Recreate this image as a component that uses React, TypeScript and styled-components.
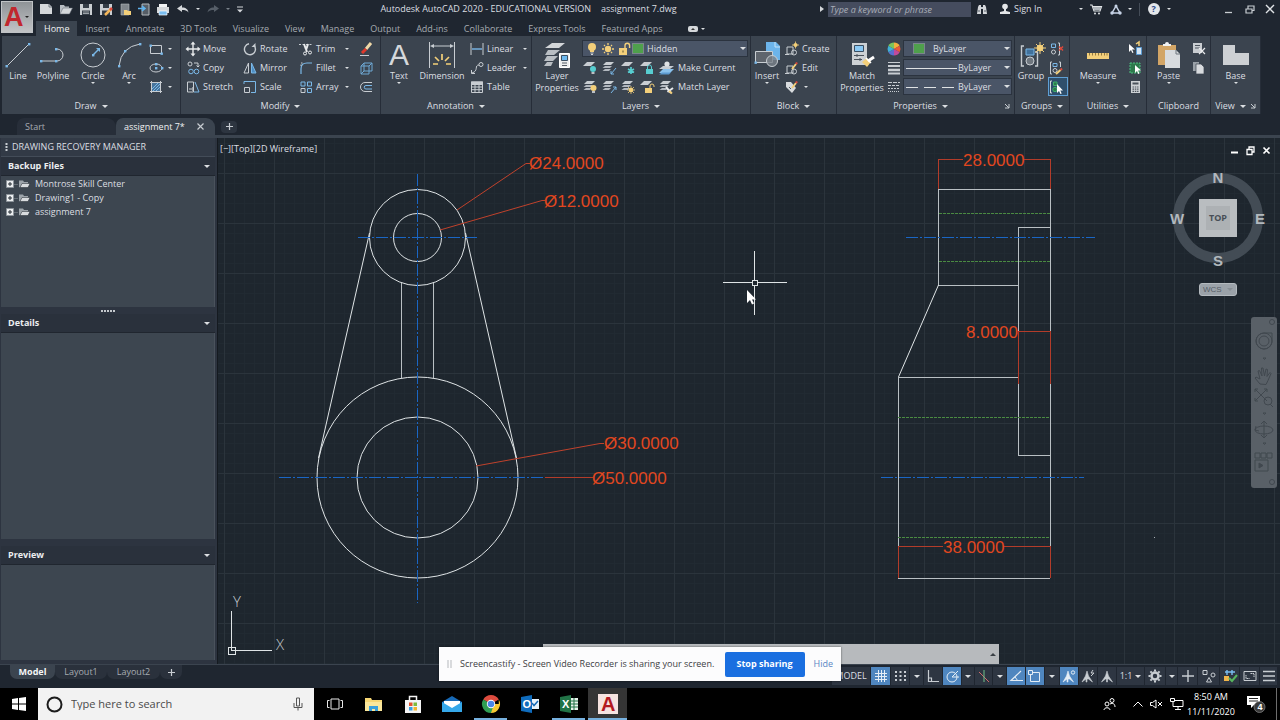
import React, { ReactNode } from 'react';
import styled, { createGlobalStyle, css } from 'styled-components';

const c = {
  frame: '#1f2630',
  panel: '#3b444f',
  line: '#262d38',
  text: '#dcdfe2',
  dim: '#a6abb1',
  icon: '#c8cdd2',
  blue: '#7ab8e8',
  yellow: '#f3cf7a',
  canvas: '#1e262e',
};

const Global = createGlobalStyle`
  * { box-sizing: border-box; }
  body { margin: 0; background: ${c.frame}; font: 9px/12px "Open Sans", "Noto Sans", sans-serif; color: ${c.text}; }
  button, input, select { font: inherit; color: inherit; margin: 0; border: 0; padding: 0; background: none; }
  ul { list-style: none; margin: 0; padding: 0; }
  svg { display: block; flex: none; overflow: visible; }
`;

const Page = styled.div`
  position: relative;
  min-height: 100vh;
  display: flex;
  flex-direction: column;
`;

/* ---------- icons ---------- */

const Icon = ({ w = 16, h = w, children }: { w?: number; h?: number; children: ReactNode }) => (
  <svg width={w} height={h} viewBox={`0 0 ${w} ${h}`} fill="none" stroke={c.icon} aria-hidden="true">
    {children}
  </svg>
);

const Caret = styled.span<{ $small?: boolean; $tone?: string; $up?: boolean }>`
  flex: none;
  width: 0;
  height: 0;
  border-left: ${(p) => (p.$small ? 2 : 3)}px solid transparent;
  border-right: ${(p) => (p.$small ? 2 : 3)}px solid transparent;
  ${(p) => (p.$up ? 'border-bottom' : 'border-top')}: ${(p) => (p.$small ? 2 : 3)}px solid ${(p) => p.$tone ?? c.text};
`;

const Dot = ({ x, y }: { x: number; y: number }) => (
  <rect x={x - 1} y={y - 1} width="2.4" height="2.4" fill={c.blue} stroke="none" />
);

const Sheets = ({ tone = c.icon }: { tone?: string }) => (
  <g fill={tone} stroke="none">
    <path d="M5 2h8l-3 3H2z" />
    <path d="M4 6h7l-2 2H1.500z" opacity=".85" />
    <path d="M4 9h6l-2 2H1.500z" opacity=".85" />
  </g>
);
const Sheet = () => <path d="M5 2h8l-4 4H1z" fill={c.icon} stroke="none" />;

const art: Record<string, ReactNode> = {
  newFile: <Icon w={14} h={12}><path d="M1 1h9l3 3v7H1z" fill="#d5d8db" stroke="none" /><path d="M10 1v3h3" stroke="#6f767e" /></Icon>,
  open: <Icon w={14} h={12}><path d="M1 11V2h4l1 1.500h4V5" fill="#b9bec4" stroke="none" /><path d="M1 11l3-6h9.500l-3 6z" fill="#d5d8db" stroke="#59616b" strokeWidth=".5" /></Icon>,
  save: <Icon w={14} h={13}><path d="M1 1h12v11H1z" fill="#c9cdd1" stroke="none" /><path d="M4 1h6v4H4zM3 7.500h8V12H3z" fill="#343c46" stroke="none" /><path d="M4 9h6M4 10.500h6" stroke="#c9cdd1" strokeWidth=".7" /></Icon>,
  saveAs: <Icon w={14} h={13}><path d="M1 1h12v11H1z" fill="#c9cdd1" stroke="none" /><path d="M4 1h6v4H4zM3 7.500h8V12H3z" fill="#343c46" stroke="none" /><path d="M6 12l6-6" stroke="#f3b65a" strokeWidth="2.500" /><path d="M11 7l2-2" stroke="#e0493b" strokeWidth="2.500" /></Icon>,
  openMobile: <Icon w={13} h={13}><path d="M2 1h8v11H2z" fill="#80868c" stroke="#b3b8bd" strokeWidth=".6" /><path d="M5 12V7h3l1 1h3v4z" fill="#f3cf7a" stroke="none" /></Icon>,
  saveMobile: <Icon w={12} h={13}><path d="M4 1h7v11H4z" fill="#565e67" stroke="#b3b8bd" /><path d="M0 5.500h6M4 3l3 2.500L4 8" stroke="#5fb4ef" strokeWidth="1.500" /></Icon>,
  print: <Icon w={14} h={13}><path d="M3 1h8v3H3z" fill="#f1f3f4" stroke="none" /><path d="M1 4h12v6H1z" fill="#d5d8db" stroke="none" /><path d="M3 8h8v4H3z" fill="#79bdf0" stroke="#fff" strokeWidth=".7" /></Icon>,
  undo: <Icon w={14} h={10}><path d="M1 4.500L6 1v2.500c4 0 6 2 6.500 5C11 6.500 9 6 6 6v2z" fill="#d5d8db" stroke="none" /></Icon>,
  redo: <Icon w={14} h={10}><path d="M13 4.500L8 1v2.500c-4 0-6 2-6.500 5C3 6.500 5 6 8 6v2z" fill="#565e68" stroke="none" /></Icon>,
  more: <Icon w={8} h={7}><path d="M1 1h6" stroke="#d5d8db" /><path d="M1 3.500h6L4 6.500z" fill="#d5d8db" stroke="none" /></Icon>,
  binoculars: <Icon w={12} h={12}><path d="M1 11l1-7 1-2h2v9zM7 11V2h2l1 2 1 7z" fill="#d5d8db" stroke="none" /><path d="M5 5h2" strokeWidth="2" /><path d="M2 8h2M8 8h2" stroke="#59616b" /></Icon>,
  user: <Icon w={12} h={12}><circle cx="6" cy="3.500" r="2.800" fill="#e4e6e8" stroke="none" /><path d="M5 5h2v3l4 1v2H1V9l4-1z" fill="#e4e6e8" stroke="none" /></Icon>,
  cart: <Icon w={12} h={11}><path d="M0 1h2l2 6h6l1.500-4.500H3" fill="none" stroke="#e0e3e6" strokeWidth="1.200" /><path d="M3 3h8l-1 3H4z" fill="#aeb4ba" stroke="none" /><circle cx="5" cy="9.500" r="1" fill="#e0e3e6" stroke="none" /><circle cx="9" cy="9.500" r="1" fill="#e0e3e6" stroke="none" /></Icon>,
  autodesk: <Icon w={12} h={11}><path d="M6 2L2 9h8z" stroke="#c7d3e6" strokeWidth="1.500" /><circle cx="6" cy="2" r="1.500" fill="#c7d3e6" stroke="none" /><circle cx="2" cy="9" r="1.700" fill="#c7d3e6" stroke="none" /><circle cx="10" cy="9" r="1.700" fill="#c7d3e6" stroke="none" /></Icon>,
  min: <Icon w={10} h={10}><path d="M1 8.500h7" strokeWidth="1.300" /></Icon>,
  restore: <Icon w={10} h={10}><path d="M1 5h6v4H1zM3 4.500V2h6v4.500H7.500" strokeWidth="1.200" /></Icon>,
  close: <Icon w={10} h={10}><path d="M1 1l8 8M9 1L1 9" stroke="#e0e3e6" strokeWidth="1.400" /></Icon>,

  line: <Icon w={28} h={28}><path d="M3 25L25 3" /><Dot x={2.500} y={25} /><Dot x={25} y={3} /></Icon>,
  polyline: <Icon w={28} h={28}><path d="M2 20h16a6 6 0 0 0 0-12" /><Dot x={2} y={20} /><Dot x={17} y={20} /><Dot x={17} y={8} /></Icon>,
  circle: <Icon w={28} h={28}><circle cx="14" cy="14" r="12" /><path d="M14 14l6-6" stroke={c.blue} strokeWidth="1.500" /><path d="M17 7h4v4z" fill={c.blue} stroke="none" /><Dot x={14} y={14} /></Icon>,
  arc: <Icon w={28} h={28}><path d="M4 25Q6 6 25 3" /><Dot x={4} y={25} /><Dot x={10} y={10} /><Dot x={25} y={3} /></Icon>,
  rect: <Icon><path d="M2.500 4.500h11v8h-11z" /><Dot x={2.500} y={4.500} /><Dot x={13.500} y={12.500} /></Icon>,
  ellipse: <Icon><ellipse cx="8" cy="8" rx="6" ry="4" /><Dot x={8} y={8} /><Dot x={8} y={4} /><Dot x={14} y={8} /></Icon>,
  hatch: <Icon><path d="M4 4h8v8H4z" fill="#47749c" stroke="none" /><path d="M4 10l6-6M5 12l7-7M8 12l4-4" stroke={c.blue} /><path d="M2 3.500h12M2 12.500h12M3.500 2v12M12.500 2v12" /></Icon>,
  move: <Icon><path d="M8 2v12M2 8h12" stroke="#e8eaec" strokeWidth="1.400" /><path d="M8 0.500l2.500 3h-5zM8 15.500l2.500-3h-5zM.5 8l3-2.500v5zM15.500 8l-3-2.500v5z" fill="#e8eaec" stroke="none" /></Icon>,
  rotate: <Icon><path d="M12 4.500A5.500 5.500 0 1 1 7 2.800" strokeWidth="1.400" /><path d="M13.500 2v4h-4z" fill={c.icon} stroke="none" /></Icon>,
  trim: <Icon><path d="M1 3.500h14" strokeDasharray="2 1.500" /><path d="M6 3l3 8M10 3L8 9" strokeWidth="2" stroke="#e8eaec" /><circle cx="7" cy="12.500" r="1.500" stroke="#e8eaec" /><circle cx="12" cy="11.500" r="1.500" stroke="#e8eaec" /></Icon>,
  erase: <Icon><path d="M8 8l5-6" stroke="#f0d9a8" strokeWidth="3" /><path d="M4 12l4-4" stroke="#e0392c" strokeWidth="3" /><path d="M2 14.500h9" stroke={c.icon} /></Icon>,
  copy: <Icon><circle cx="5" cy="4" r="2" /><path d="M9 3h4v4M11.500 5.500L13 7l1.500-1.500" /><circle cx="6" cy="11.500" r="2.300" stroke={c.blue} /><circle cx="11.500" cy="11.500" r="2.300" stroke={c.blue} /></Icon>,
  mirror: <Icon><path d="M6.500 3v10H2z" /><path d="M9.500 3v10H14z" fill="#4f8fc4" stroke={c.blue} /></Icon>,
  fillet: <Icon><path d="M3 14V9q0-6 6-6h5" stroke={c.blue} strokeWidth="1.200" /><path d="M3 6V3h3" strokeDasharray="1.500 1.500" /></Icon>,
  explode: <Icon><path d="M3 6h8v8H3zM6 3h8v8h-3M3 6l3-3v8M11 6l3-3M6 11h5M6 11l-3 3" stroke="#6fa9d6" /></Icon>,
  stretch: <Icon><path d="M2.500 3v10h6V3z" /><path d="M10 3l4 10h-5" stroke={c.blue} /><path d="M4 10h4M7 8.500l2 1.500-2 1.500" /></Icon>,
  scale: <Icon><path d="M2 5V2.500h11.500v11H9" stroke={c.blue} /><path d="M2.500 8.500h5v5h-5z" /></Icon>,
  array: <Icon><path d="M3 3h4v4H3zM9.500 3h4v4h-4zM9.500 9.500h4v4h-4z" stroke={c.blue} /><path d="M3 9.500h4v4H3z" /></Icon>,
  offset: <Icon><path d="M14 3.500H7a4.500 4.500 0 0 0 0 9h7" /><path d="M14 6.500H8a1.700 1.700 0 0 0 0 3.500h6" stroke={c.blue} /></Icon>,
  dimension: <Icon w={28} h={28}><path d="M1.500 1v26M26.500 1v26M4 5h20" /><path d="M2 5l4-2v4zM26 5l-4-2v4z" fill={c.icon} stroke="none" /><path d="M5 23h5M23 23h-5M14 13v6M7 16l4 4M21 16l-4 4" stroke={c.yellow} strokeWidth="1.700" /></Icon>,
  linear: <Icon><path d="M2 2v12M14 2v12" /><path d="M3 8h10" stroke={c.blue} strokeWidth="1.400" /></Icon>,
  leader: <Icon><circle cx="12" cy="4.500" r="2" /><path d="M10 5C5 5 10 11 3 13M2.500 10v3.500H6" /></Icon>,
  table: <Icon><path d="M2.500 3h11v10.500h-11zM2.500 8h11M2.500 10.700h11M6 5v8.500M10 5v8.500" /><path d="M2 2.500h12V6H2z" fill={c.icon} stroke="none" /></Icon>,
  layerProps: <Icon w={28} h={28}><path d="M9 2h13l-6 5H2z" fill="#d3d6d9" stroke="none" /><path d="M5 9h12l-6 5H2zM4 15h11l-5 5H1zM4 21h6l-2 4H1z" fill="#b9bec3" stroke="none" /><path d="M16.500 12.500h10v14h-10z" fill="#eceeef" stroke="#ffffff" /><path d="M18.500 14.500h6v5h-6z" fill="#6db9ef" stroke="#3a4f63" /><path d="M19 22h5M19 24.500h5" stroke="#555d66" /></Icon>,
  bulb: <Icon><circle cx="8" cy="6" r="4" fill={c.yellow} stroke="none" /><path d="M6 9h4v2H6z" fill={c.yellow} stroke="none" /><path d="M6.500 12h3M7 13.500h2" stroke="#cfd3d6" /></Icon>,
  sun: <Icon><circle cx="8" cy="8" r="3.200" fill={c.yellow} stroke="none" /><path d="M8 2v2M8 12v2M2 8h2M12 8h2M4 4l1 1M11 11l1 1M12 4l-1 1M4 12l1-1" stroke={c.yellow} strokeWidth="1.300" /></Icon>,
  unlock: <Icon><path d="M3 7h8v7H3z" fill={c.yellow} stroke="none" /><path d="M9 7V4.500a2.300 2.300 0 0 1 4.600 0V7" stroke={c.yellow} strokeWidth="1.400" /><path d="M7 9.500v2" stroke="#5b5030" /></Icon>,
  layOff: <Icon><Sheet /><circle cx="11" cy="9" r="3" fill="#57cdd0" stroke="none" /><path d="M9.500 13h3" stroke="#e8eaec" strokeWidth="1.500" /></Icon>,
  layIso: <Icon><Sheets /><path d="M15 8l-5 6M10 11v3h3" stroke={c.blue} /></Icon>,
  layFreeze: <Icon><Sheet /><path d="M11 7v7M8 9l6 3.500M14 9l-6 3.500" stroke="#57cdd0" strokeWidth="1.700" /></Icon>,
  layLock: <Icon><Sheet /><path d="M7 9h7v5H7z" fill="#57cdd0" stroke="none" /><path d="M8.500 9V7a2 2 0 0 1 4 0v2" stroke="#57cdd0" /></Icon>,
  layCurrent: <Icon w={18} h={16}><path d="M5 9h11l-4 4H1z" fill="#8ac1ec" stroke="none" /><path d="M5 6h11l-4 3H1z" fill={c.icon} stroke="none" /><path d="M4 12.500h9l-2 2H1z" fill="#5c9ad0" stroke="none" /><circle cx="9" cy="4" r="2.600" fill="#dfe2e4" stroke="none" /></Icon>,
  layOn: <Icon><Sheets /><circle cx="11.500" cy="9" r="3" fill={c.yellow} stroke="none" /><path d="M10 13h3" stroke="#e8eaec" strokeWidth="1.500" /></Icon>,
  layUniso: <Icon><Sheets /><path d="M10 14l5-6M12 8h3v3" stroke={c.blue} /></Icon>,
  layThaw: <Icon><Sheets /><circle cx="11" cy="11" r="2.200" fill={c.yellow} stroke="none" /><path d="M11 7v8M7 11h8M8 8l6 6M14 8l-6 6" stroke={c.yellow} strokeWidth=".8" /></Icon>,
  layUnlock: <Icon><Sheet /><path d="M6 9h7v5H6z" fill={c.yellow} stroke="none" /><path d="M11 9V7a2 2 0 0 1 4 0v1" stroke={c.yellow} /></Icon>,
  layMatch: <Icon w={18} h={16}><Sheets /><path d="M8 8l5 6M9.500 13L15 9" stroke="#e8eaec" strokeWidth="2" /><path d="M11 12l3 2.500" stroke={c.yellow} strokeWidth="2" /></Icon>,
  insert: <Icon w={28} h={28}><path d="M13 1h10l4 4v14H13z" fill="#6cb4ea" stroke="none" /><path d="M22 1v5h5" stroke="#c5e2f7" /><path d="M2.500 10.500h17v11h-17z" fill="#5f656d" /><circle cx="19" cy="20" r="5.500" fill="#7a828a" fillOpacity=".8" /><Dot x={2.500} y={21.500} /></Icon>,
  blkCreate: <Icon><path d="M3 6h6v7H3zM1 13.500h4" /><circle cx="10" cy="11.500" r="2.500" /><circle cx="11.500" cy="4" r="2" fill={c.yellow} stroke="none" /><path d="M11.500 .5v7M8 4h7" stroke={c.yellow} strokeWidth=".8" /></Icon>,
  blkEdit: <Icon><path d="M3 6h6v7H3zM1 13.500h4" /><circle cx="10" cy="11.500" r="2.500" /><path d="M8 9l4-5" stroke={c.yellow} strokeWidth="2" /><path d="M12 4l1-1.500" stroke="#e0493b" strokeWidth="2.200" /></Icon>,
  blkAttr: <Icon><path d="M2 3h5l5 6-4 5-6-6z" fill="#d8dbde" stroke="none" /><path d="M5 8l2 2" stroke="#505861" /><path d="M8 9l4-5" stroke={c.yellow} strokeWidth="2" /><path d="M12 4l1-1.500" stroke="#e0493b" strokeWidth="2.200" /></Icon>,
  matchProps: <Icon w={28} h={28}><path d="M4 2h15v22H4z" fill="#cdd1d4" stroke="none" /><path d="M6.500 4.500h9v6h-9z" fill="#8ac9f4" stroke="#3a4f63" /><path d="M6 14.500h10M6 18.500h8" stroke="#4b535c" /><path d="M9 13v3M12 17v3" stroke="#4b535c" /><path d="M14 21l5 5 4-5-4-4z" fill={c.yellow} stroke="none" /><path d="M20 20l6-4" stroke="#fff" strokeWidth="3" /><path d="M18 17l5 5" stroke="#fff" strokeWidth="1.500" /></Icon>,
  wheel: <Icon w={14}><g stroke="none"><path d="M7 7V0.500A6.500 6.500 0 0 1 12.600 3.800z" fill="#f2b13c" /><path d="M7 7l5.600-3.200a6.500 6.500 0 0 1 0 6.400z" fill="#e85a3a" /><path d="M7 7l5.600 3.200A6.500 6.500 0 0 1 7 13.500z" fill="#c24a9a" /><path d="M7 7v6.500a6.500 6.500 0 0 1-5.600-3.300z" fill="#5a6fd0" /><path d="M7 7l-5.600 3.200a6.500 6.500 0 0 1 0-6.400z" fill="#3fb0d8" /><path d="M7 7L1.400 3.800A6.500 6.500 0 0 1 7 .5z" fill="#7cc45a" /></g></Icon>,
  weights: <Icon w={14}><path d="M1 1.500h12" /><path d="M1 5h12" strokeWidth="2" /><path d="M1 9h12" strokeWidth="2.500" /><path d="M1 12.500h12" strokeWidth="2" /></Icon>,
  dashes: <Icon w={14}><path d="M1 2.500h12" strokeDasharray="4 1" /><path d="M1 5.500h12" strokeDasharray="3 1" /><path d="M1 8.500h12" strokeDasharray="2 1" /><path d="M1 11.500h12" strokeDasharray="1 1" /></Icon>,
  group: <Icon w={28} h={28}><path d="M7 5H4.500v20H7M18 11h2.500v14H18" strokeWidth="1.400" /><path d="M9 8h8v6H9z" fill="#41719b" stroke={c.blue} /><circle cx="13" cy="20" r="4" fill="#6f777f" /><circle cx="23" cy="7" r="3.300" fill={c.yellow} stroke="none" /><path d="M23 1v12M17 7h12M19 3l8 8M27 3l-8 8" stroke={c.yellow} /></Icon>,
  ungroup: <Icon><path d="M3.500 3h4v3.500h-4z" stroke={c.blue} /><circle cx="5.500" cy="11" r="2" /><path d="M10 2h1.500v12H10" /><path d="M11 5.500l4 4M15 5.500l-4 4" stroke="#e0493b" strokeWidth="1.400" /></Icon>,
  groupEdit: <Icon><path d="M4 2H2.500v12H4M11 2h1.500v5" /><path d="M5 3.500h4v3H5z" stroke={c.blue} /><circle cx="7" cy="10.500" r="2" /><path d="M8 14l4.500-4" stroke={c.yellow} strokeWidth="2" /><path d="M12.500 10L14 8.500" stroke="#e0493b" strokeWidth="2" /></Icon>,
  groupSel: <Icon><path d="M4 2H2.500v12H4" stroke="#d8dbde" /><path d="M5.500 3h3.500v3.500H5.500z" stroke="#3fae6c" fill="#2d7a4c" /><circle cx="7" cy="10.500" r="2.200" stroke="#3fae6c" fill="#2d7a4c" /><path d="M9 5v9l2-2 1.500 3 1.200-.6-1.400-2.900H15z" fill="#fff" stroke="none" /></Icon>,
  measure: <Icon w={28} h={28}><path d="M3 12h22v6H3z" fill={c.yellow} stroke="none" /><path d="M5.500 12v2.500M8.500 12v2.500M11.500 12v2.500M14.500 12v2.500M17.500 12v2.500M20.500 12v2.500M23 12v2.500" stroke="#7b6432" strokeWidth=".8" /></Icon>,
  quickSel: <Icon><path d="M9.500 6.500h5v7h-5z" fill="#d5e6f5" stroke="#5c9ad0" /><path d="M9 3l3-2v4" stroke={c.yellow} strokeWidth="1.500" /><path d="M2 3v8l2-2 1.300 3 1.200-.6-1.400-2.800H8z" fill="#fff" stroke="none" /></Icon>,
  selectAll: <Icon><path d="M3 3h10v10H3z" fill="#2d7a4c" stroke="#4fc080" strokeDasharray="2 1" /><path d="M8 5v8l2-2 1.300 3 1.200-.6-1.400-2.800H14z" fill="#fff" stroke="none" /></Icon>,
  calc: <Icon><path d="M4 2h9v12H4z" fill="#cdd1d4" stroke="none" /><path d="M5.500 3.500h6v2h-6z" fill="#4b535c" stroke="none" /><path d="M5.500 8h6M5.500 10.200h6M5.500 12.400h6" stroke="#4b535c" strokeWidth="1.200" strokeDasharray="1.500 .8" /></Icon>,
  paste: <Icon w={28} h={28}><path d="M3 4h18v20H3z" fill="#d2a566" stroke="none" /><path d="M8 5V3h2a2 2 0 0 1 4 0h2v2z" fill="#f0f1f2" stroke="none" /><path d="M10 9h11l4 4v14H10z" fill="#d8dbde" stroke="none" /><path d="M21 9v4h4" stroke="#6f767e" /></Icon>,
  cut: <Icon><path d="M2 2h9v10H2z" fill="#c9cdd1" stroke="none" /><path d="M4 4.500h5M4 7h5" stroke="#4b535c" /><path d="M8 7l6 6M14 7l-6 6" stroke="#e8eaec" strokeWidth="1.200" /></Icon>,
  copyClip: <Icon><path d="M2 2h6v9H2z" fill="#9aa1a8" stroke="none" /><path d="M5 4h5l3 3v7H5z" fill="#d8dbde" stroke="#3b444f" strokeWidth=".7" /></Icon>,
  base: <Icon w={28} h={28}><path d="M1 4h12v8h14v12H1z" fill="#cdd0d3" stroke="none" /></Icon>,
  launcher: <Icon w={6} h={6}><path d="M1 1l4 4M5 1v4H1" /></Icon>,
};

/* ---------- title bar ---------- */

const Header = styled.header`
  display: grid;
  grid-template-columns: 36px 1fr;
  grid-template-rows: 18px 18px;
`;
const AppButton = styled.button`
  grid-row: 1 / 3;
  align-self: start;
  width: 32px;
  height: 32px;
  margin: 1px 0 0 1px;
  display: flex;
  align-items: center;
  gap: 1px;
  background: linear-gradient(#8f9397, #c2c4c6);
  color: #c1272d;
  font: bold 27px/30px "Liberation Sans", sans-serif;
  padding-left: 2px;
  border: 1px solid #c0c3c6;
`;
const TitleBar = styled.div`
  display: flex;
  align-items: center;
`;
const QuickBar = styled.div`
  display: flex;
  align-items: center;
  gap: 6px;
  width: 207px;
  padding-left: 3px;
`;
const PlainButton = styled.button`
  display: flex;
  align-items: center;
  gap: 3px;
  white-space: nowrap;
`;
const Title = styled.h1`
  flex: 1;
  display: flex;
  justify-content: center;
  gap: 10px;
  margin: 0;
  padding-right: 6px;
  font: inherit;
  white-space: nowrap;
`;
const Search = styled.input`
  width: 143px;
  height: 15px;
  margin: 0 5px 0 4px;
  padding: 0 2px;
  background: #454c5e;
  font-style: italic;
  &::placeholder { color: #a9aeb8; opacity: 1; }
`;
const TitleTools = styled.div<{ $gap: number; $w: number }>`
  display: flex;
  align-items: center;
  justify-content: space-between;
  gap: ${(p) => p.$gap}px;
  width: ${(p) => p.$w}px;
`;
const Spacer = styled.span<{ $w: number }>`
  flex: 0 0 ${(p) => p.$w}px;
`;
const Help = styled.button`
  width: 12px;
  height: 12px;
  border-radius: 50%;
  background: #e4e7ea;
  color: #2b4a8c;
  font-weight: bold;
`;
const Divider = styled.span`
  width: 1px;
  height: 13px;
  background: #454d58;
`;

const Tabs = styled.nav`
  display: flex;
  align-items: flex-end;
`;
const Tab = styled.button<{ $on?: boolean }>`
  height: 15px;
  padding: 0 8px;
  color: ${(p) => (p.$on ? '#f0f1f2' : c.dim)};
  background: ${(p) => (p.$on ? c.panel : 'transparent')};
  white-space: nowrap;
`;
const Pill = styled.span`
  width: 10px;
  height: 6px;
  border-radius: 2px;
  background: #d5d8db;
  display: flex;
  align-items: center;
  justify-content: center;
`;

/* ---------- ribbon ---------- */

const Ribbon = styled.div`
  display: flex;
  padding-left: 2px;
`;
const PanelBox = styled.section<{ $w: number }>`
  flex: 0 0 ${(p) => p.$w}px;
  display: flex;
  flex-direction: column;
  background: ${c.panel};
  border-right: 1px solid ${c.line};
`;
const PanelBody = styled.div`
  display: flex;
  height: 62px;
  padding-top: 3px;
`;
const PanelFoot = styled.div`
  display: flex;
  align-items: center;
  height: 16px;
`;
const PanelName = styled.button`
  flex: 1;
  display: flex;
  align-items: center;
  justify-content: center;
  gap: 5px;
`;
const Launcher = styled.button`
  width: 10px;
`;
const Panel = ({ name, w, caret = true, launcher, children }: { name: string; w: number; caret?: boolean; launcher?: boolean; children: ReactNode }) => (
  <PanelBox $w={w}>
    <PanelBody>{children}</PanelBody>
    <PanelFoot>
      <PanelName>{name}{caret && <Caret />}</PanelName>
      {launcher && <Launcher aria-label={`${name} settings`}>{art.launcher}</Launcher>}
    </PanelFoot>
  </PanelBox>
);

const BigBtn = styled.button<{ $w: number }>`
  flex: 0 0 ${(p) => p.$w}px;
  display: flex;
  flex-direction: column;
  align-items: center;
  white-space: nowrap;
`;
const BigIcon = styled.span`
  height: 31px;
  display: flex;
  align-items: center;
`;
const BigLetter = styled.span`
  font: 30px/30px "Liberation Sans", sans-serif;
  color: #d5d8db;
`;
const Big = ({ icon, label, w, caret }: { icon: ReactNode; label: string; w: number; caret?: boolean }) => (
  <BigBtn $w={w}>
    <BigIcon>{icon}</BigIcon>
    {label.split('\n').map((t) => <span key={t}>{t}</span>)}
    {caret && <Caret $small />}
  </BigBtn>
);

const Col = styled.div<{ $w?: number; $ml?: number }>`
  display: grid;
  grid-template-rows: repeat(3, 19px);
  width: ${(p) => (p.$w ? p.$w + 'px' : 'auto')};
  margin-left: ${(p) => p.$ml ?? 0}px;
`;
const SmallBtn = styled.button<{ $on?: boolean }>`
  display: flex;
  align-items: center;
  gap: 2px;
  white-space: nowrap;
  ${(p) => p.$on && css`background: #2f4f6c; outline: 1px solid #5f9fd4; outline-offset: -1px;`}
`;
const SmallLabel = styled.span<{ $grow?: boolean }>`
  flex: ${(p) => (p.$grow ? 1 : 'none')};
  text-align: left;
`;
const Cmd = ({ icon, label, caret, on, tip }: { icon: string; label?: string; caret?: boolean; on?: boolean; tip?: string }) => (
  <SmallBtn $on={on} aria-label={label ? undefined : tip ?? icon}>
    {art[icon]}
    {label && <SmallLabel $grow={caret}>{label}</SmallLabel>}
    {caret && <><span /><Caret $small /></>}
  </SmallBtn>
);
const Row = styled.div`
  display: flex;
  align-items: center;
  gap: 3px;
`;

const Combo = styled.label<{ $w: number }>`
  position: relative;
  display: flex;
  align-items: center;
  align-self: center;
  width: ${(p) => p.$w}px;
  height: 17px;
  background: #4a5567;
  border: 1px solid #2b333f;
`;
const ComboSelect = styled.select<{ $pad: number }>`
  appearance: none;
  width: 100%;
  height: 15px;
  padding-left: ${(p) => p.$pad}px;
`;
const ComboArt = styled.span`
  position: absolute;
  left: 1px;
  display: flex;
  align-items: center;
  pointer-events: none;
`;
const ComboCaret = styled.span`
  position: absolute;
  right: 1px;
  display: flex;
  pointer-events: none;
`;
const Swatch = styled.span<{ $ml: number }>`
  width: 12px;
  height: 11px;
  margin-left: ${(p) => p.$ml}px;
  background: #4fa04c;
  border: 1px solid #7b868c;
`;
const Picker = ({ w, pad, value, name, children }: { w: number; pad: number; value: string; name: string; children: ReactNode }) => (
  <Combo $w={w}>
    <ComboSelect $pad={pad} aria-label={name}><option>{value}</option></ComboSelect>
    <ComboArt>{children}</ComboArt>
    <ComboCaret><Caret /></ComboCaret>
  </Combo>
);

/* ---------- file tabs ---------- */

const FileTabs = styled.div`
  display: flex;
  align-items: flex-end;
  height: 24px;
  padding: 4px 0 0 17px;
  border-bottom: 3px solid ${c.panel};
`;
const FileTab = styled.div<{ $on?: boolean }>`
  display: flex;
  align-items: center;
  justify-content: space-between;
  width: 99px;
  height: 17px;
  padding: 0 11px 0 8px;
  border-radius: 7px 9px 0 0;
  background: ${(p) => (p.$on ? c.panel : '#272e39')};
  color: ${(p) => (p.$on ? '#f0f1f2' : c.dim)};
`;
const AddTab = styled.button`
  align-self: center;
  width: 16px;
  height: 12px;
  margin-left: 6px;
  border-radius: 4px;
  background: #2d3540;
  display: flex;
  align-items: center;
  justify-content: center;
`;
const Cross = () => <Icon w={7}><path d="M.5 .5l6 6M6.500 .5l-6 6" strokeWidth="1.200" /></Icon>;
const Plus = () => <Icon w={7}><path d="M3.500 0v7M0 3.500h7" strokeWidth="1.200" /></Icon>;

/* ---------- recovery manager ---------- */

const Main = styled.main`
  flex: 1;
  display: flex;
  border-bottom: 1px solid ${c.panel};
`;
const Side = styled.aside`
  flex: 0 0 218px;
  display: flex;
  flex-direction: column;
  padding: 0 2px 4px 1px;
  background: #2d3440;
  border-right: 1px solid #151a20;
`;
const SideTitle = styled.h2`
  display: flex;
  align-items: center;
  gap: 4px;
  height: 19px;
  margin: 0;
  padding-left: 4px;
  font: inherit;
  background: #323a46;
  border-bottom: 1px solid #434c58;
`;
const SectionHead = styled.button`
  display: flex;
  align-items: center;
  justify-content: space-between;
  height: 19px;
  padding: 0 5px 0 7px;
  background: #2a313c;
  border-bottom: 1px solid #20262f;
  font-weight: bold;
  color: #eceef0;
`;
const SectionBody = styled.div<{ $grow: number }>`
  flex: ${(p) => p.$grow} 0 0;
  background: #3d4650;
  border-right: 1px solid #4a525c;
`;
const Splitter = styled.div`
  display: flex;
  align-items: center;
  justify-content: center;
  height: 7px;
  gap: 1px;
`;
const SplitDot = styled.i`
  width: 2px;
  height: 2px;
  background: #c4c8cc;
`;
const Tree = styled.ul`
  padding-top: 1px;
`;
const TreeRow = styled.li`
  display: flex;
  align-items: center;
  height: 14px;
  gap: 5px;
  padding-left: 5px;
`;

/* ---------- drawing canvas ---------- */

const Canvas = styled.section`
  position: relative;
  flex: 1;
  min-height: 526px;
  background-color: ${c.canvas};
  background-image:
    linear-gradient(#2b343c 1px, transparent 1px),
    linear-gradient(90deg, #2b343c 1px, transparent 1px),
    linear-gradient(#212a32 1px, transparent 1px),
    linear-gradient(90deg, #212a32 1px, transparent 1px);
  background-size: 50px 50px, 50px 50px, 10px 10px, 10px 10px;
  background-position: 0 35px, 6px 0, 0 5px, 6px 0;
`;
const Drawing = styled.svg`
  position: absolute;
  inset: 0;
  width: 100%;
  height: 100%;
`;
const ViewLabel = styled.div`
  position: absolute;
  top: 5px;
  left: 2px;
`;
const WindowTools = styled.div`
  position: absolute;
  top: 8px;
  right: 9px;
  display: flex;
  gap: 7px;
`;
const CubeBox = styled.div`
  position: absolute;
  top: 30px;
  right: 12px;
  width: 100px;
  display: flex;
  flex-direction: column;
  align-items: center;
  gap: 15px;
`;
const Wcs = styled.button`
  display: flex;
  align-items: center;
  justify-content: space-between;
  width: 38px;
  height: 13px;
  padding: 0 3px;
  border-radius: 3px;
  background: #9ba2a9;
  border: 1px solid #b4babf;
  color: #555d66;
  font: 8px/10px "Liberation Sans", sans-serif;
`;
const NavBar = styled.div`
  position: absolute;
  top: 179px;
  right: 3px;
  width: 26px;
  height: 171px;
  border-radius: 3px;
  background: #596067;
`;
const CommandLine = styled.div`
  position: absolute;
  left: 325px;
  right: 281px;
  bottom: 0;
  height: 20px;
  display: flex;
  align-items: center;
  background: #b7babd;
  padding-right: 3px;
`;
const CommandInput = styled.input`
  flex: 1;
  height: 20px;
  color: #222;
`;

const Centre = ({ d }: { d: string }) => <path d={d} stroke="#1a66c4" strokeDasharray="12 2 2 2" />;

const Part = () => (
  <Drawing viewBox="218 138 1062 526" preserveAspectRatio="xMinYMin meet" fill="none" role="img" aria-label="Link arm, front and side views">
    <g stroke="#dfe4e6">
      <circle cx="417.500" cy="237.500" r="48" />
      <circle cx="417.500" cy="237.500" r="24" />
      <circle cx="417.500" cy="477.500" r="100.500" />
      <circle cx="417.500" cy="477.500" r="60.500" />
      <path d="M369.500 233L318.500 458M465.500 233L516.500 458" />
    </g>
    <g stroke="#b9c0c4" shapeRendering="crispEdges">
      <path d="M401.500 283V378M433.500 283V378" />
      <path d="M938.500 189V285.500H1018M938 189.500H1050.500V546" />
      <path d="M1018.500 332V227.500H1050M1018.500 384V455.500H1050" />
      <path d="M898.500 546V377.500H1018M898 578H1050" />
    </g>
    <path d="M938.500 285L898.500 377" stroke="#dfe4e6" />
    <Centre d="M417.500 174V603" />
    <Centre d="M358 237.500H477" />
    <Centre d="M279 477.500H545" />
    <Centre d="M906 237.500H1095" />
    <Centre d="M881 477.500H1084" />
    <path d="M939 213.500H1050M939 261.500H1050M898 417.500H1050M898 537.500H1050" stroke="#4a8a42" strokeDasharray="3 1" />
    <path d="M457 210L526 163.500H530M440 230L542 200.500H545M476 466L600 443.500H604" stroke="#c0422c" />
    <path d="M545 477.500H593M938.500 189V159.500H963M1024 159.500H1050.500V189M1018.500 384V331.500H1050.500V384M898.500 578V546.500H943M1004 546.500H1050.500V578" stroke="#b33c2a" shapeRendering="crispEdges" />
    <g fill="#e2471f" fontFamily="Liberation Sans, Arial, sans-serif" fontSize="17">
      <text x="529" y="169">Ø24.0000</text>
      <text x="544" y="207">Ø12.0000</text>
      <text x="604" y="449">Ø30.0000</text>
      <text x="592" y="484">Ø50.0000</text>
      <text x="963" y="166">28.0000</text>
      <text x="966" y="338">8.0000</text>
      <text x="943" y="553">38.0000</text>
    </g>
    <g stroke="#dfe4e6" shapeRendering="crispEdges">
      <path d="M754.500 251V280M754.500 286V315M723 282.500H752M758 282.500H787M752.500 280.500h5v5h-5z" />
      <path d="M231.500 611V650.500H272M228.500 647.500h7v7h-7z" />
    </g>
    <path d="M747 290v13l3-3 2 4.500 2-1-2-4h4z" fill="#fff" />
    <rect x="1154" y="537" width="1" height="1" fill="#a9b0b5" />
    <g fill="#c3c9cd" fontFamily="Open Sans, sans-serif" fontWeight="300" fontSize="15">
      <text x="233" y="607">Y</text>
      <text x="276" y="650">X</text>
    </g>
  </Drawing>
);

const Cube = () => (
  <svg width="100" height="100" viewBox="0 0 100 100">
    <circle cx="50" cy="50" r="40" fill="none" stroke="#434c55" strokeWidth="10" />
    <rect x="31" y="31" width="38" height="38" fill="#b9bdc0" />
    <rect x="38" y="38" width="24" height="24" fill="#adb1b4" />
    <g fill="#b2b8bd" fontFamily="Liberation Sans, sans-serif" fontWeight="bold" fontSize="15" textAnchor="middle">
      <text x="50" y="15">N</text>
      <text x="50" y="98">S</text>
      <text x="9" y="56">W</text>
      <text x="92" y="56">E</text>
    </g>
    <text x="50" y="53" fill="#474e56" fontFamily="Open Sans, sans-serif" fontWeight="bold" fontSize="9" textAnchor="middle">TOP</text>
  </svg>
);

const NavArt = () => (
  <svg width="26" height="171" viewBox="0 0 26 171" fill="none" stroke="#41484f">
    <circle cx="21" cy="5" r="2.500" />
    <path d="M13 16h8v9a8 8 0 1 1-8-9z" />
    <circle cx="13" cy="24" r="5" /><circle cx="13" cy="24" r="8" />
    <path d="M12 41h3l-1.500 1.500zM12 96h3l-1.500 1.500zM12 126h3l-1.500 1.500z" />
    <path d="M9 67l-5-6 1-1 4 2-2-8 1.500-.5L11 59l-.5-8h1.500l1.500 8 1.500-7 1.500.5-.5 7 3-4 1 1-3 7-2 4z" />
    <path d="M4 72l12 12M16 72L4 84M4 75v-3h3M13 72h3v3M4 81v3h3" /><circle cx="17" cy="84" r="4" /><path d="M19 87l3 3" />
    <ellipse cx="13" cy="113" rx="9" ry="4" /><path d="M13 104v17M10 107l3-3 3 3M10 118l3 3 3-3M5 109l-1 4 4 1" />
    <path d="M4 136h5v5H4zM10 136h5v5h-5zM16 136h5v5h-5zM4 143h13v11H4z" /><path d="M8 146v5l4-2.500z" fill="#41484f" />
    <circle cx="21" cy="165" r="2.500" />
  </svg>
);

/* ---------- status bar ---------- */

const StatusBar = styled.footer`
  display: flex;
  align-items: flex-start;
  justify-content: space-between;
  height: 23px;
`;
const LayoutTabs = styled.div`
  display: flex;
  padding-left: 10px;
`;
const LayoutTab = styled.button<{ $w: number; $on?: boolean }>`
  display: flex;
  align-items: center;
  justify-content: center;
  width: ${(p) => p.$w}px;
  height: 14px;
  border-radius: 0 0 7px 7px;
  background: ${(p) => (p.$on ? c.panel : '#2a313c')};
  color: ${(p) => (p.$on ? '#f4f5f6' : c.dim)};
  font-weight: ${(p) => (p.$on ? 'bold' : 'normal')};
`;
const StatusTools = styled.div`
  display: flex;
  gap: 1px;
  padding: 2px 3px 0 0;
`;
const StatusBtn = styled.button<{ $w: number; $on?: boolean }>`
  display: flex;
  align-items: center;
  justify-content: center;
  gap: 3px;
  width: ${(p) => p.$w}px;
  height: 18px;
  background: ${(p) => (p.$on ? '#4f86bf' : '#2e3642')};
`;

const st = {
  grid: <Icon w={14}><path d="M4.500 1v12M7.500 1v12M10.500 1v12M1 4.500h12M1 7.500h12M1 10.500h12" stroke="#e4edf5" /></Icon>,
  snap: <Icon w={14}><path d="M2 3h11M2 7h11M2 11h11" strokeWidth="2" strokeDasharray="2 2.500" /></Icon>,
  ortho: <Icon w={14}><path d="M2.500 1v11.500H13M2.500 9h3v3.500" strokeWidth="1.200" /></Icon>,
  polar: <Icon w={14}><circle cx="7" cy="8" r="5" stroke="#e4edf5" /><path d="M7 8l6-6M7 8h7" stroke="#e4edf5" /></Icon>,
  iso: <Icon w={14}><path d="M2 3l10 10" stroke="#cf6a6a" /><path d="M7 1v12" stroke="#6fbf8a" /></Icon>,
  track: <Icon w={14}><path d="M12 2L2 11.500h12" stroke="#e4edf5" strokeWidth="1.200" /><path d="M6 8l3 4" stroke="#e4edf5" /></Icon>,
  osnap: <Icon w={14}><path d="M2.500 3.500h9v9h-9z" stroke="#e4edf5" /><path d="M.5 1.500h4v4h-4z" fill="#4f86bf" stroke="#e4edf5" /></Icon>,
  annoA: <Icon w={14}><path d="M6 2l1.500 5 4 6-4-3H6v3H5v-3l-4 3 3.500-6z" fill="#e4edf5" stroke="#e4edf5" strokeWidth=".6" /><circle cx="11" cy="3.500" r="1.700" stroke="#e4edf5" /></Icon>,
  annoB: <Icon w={14}><path d="M6 2l1.500 5 4 6-4-3H6v3H5v-3l-4 3 3.500-6z" fill={c.icon} strokeWidth=".6" /><path d="M12 1l-2 3h3l-3 3" /></Icon>,
  annoC: <Icon w={14}><path d="M7 2l1.500 5 4 6-4-3H7.500v3h-1v-3H5.500l-4 3 4-6z" fill={c.icon} strokeWidth=".6" /></Icon>,
  gear: <Icon w={14}><circle cx="7" cy="7" r="3.500" strokeWidth="2.500" /><path d="M7 .5v2M7 11.500v2M.5 7h2M11.500 7h2M2.400 2.400l1.400 1.400M10.200 10.200l1.400 1.400M11.600 2.400l-1.400 1.400M2.400 11.600l1.400-1.400" strokeWidth="2" /></Icon>,
  plus: <Icon w={14}><path d="M7 1v12M1 7h12" strokeWidth="1.400" /></Icon>,
  shapes: <Icon w={14}><path d="M1 1.500h4v4H1zM4.500 13l2.500-4.500L9.500 13z" /><circle cx="11" cy="6" r="2" /></Icon>,
  perf: <Icon w={14}><path d="M1 7h5v5H1z" fill="#f0b54a" stroke="none" /><path d="M2 3h10M4 1v5M9 1v5" stroke="#79bdf0" strokeWidth="1.400" /><path d="M6 9l3 3 5-6" stroke="#57b55e" strokeWidth="2" /></Icon>,
  full: <Icon w={14}><path d="M1 2.500h12v9H1z" /><path d="M7.500 4.500H11V8M3 6v3.500h3.500" strokeDasharray="1.500 .5" /></Icon>,
  menu: <Icon w={14}><path d="M1 2.500h12M1 7h12M1 11.500h12" strokeWidth="1.600" /></Icon>,
};

/* ---------- share notice ---------- */

const Notice = styled.div`
  position: absolute;
  bottom: 39px;
  left: 50%;
  width: 402px;
  height: 34px;
  margin-left: -201px;
  display: flex;
  align-items: center;
  padding: 0 8px;
  background: #fcfcfd;
  color: #3c4043;
  box-shadow: 0 0 2px #0008;
  white-space: nowrap;
`;
const NoticeText = styled.span`
  margin-left: 8px;
  flex: 1;
`;
const StopButton = styled.button`
  width: 80px;
  height: 25px;
  border-radius: 2px;
  background: #1a6fe0;
  color: #fff;
  font-weight: bold;
`;
const HideLink = styled.a`
  margin-left: 9px;
  color: #5a86c4;
  text-decoration: none;
`;

/* ---------- taskbar ---------- */

const Taskbar = styled.nav`
  display: flex;
  height: 32px;
  background: #000;
`;
const Start = styled.button`
  width: 38px;
  display: flex;
  align-items: center;
  justify-content: center;
`;
const TaskSearch = styled.label`
  display: flex;
  align-items: center;
  width: 276px;
  padding: 0 11px 0 8px;
  gap: 8px;
  background: #f2f2f2;
`;
const TaskInput = styled.input`
  flex: 1;
  min-width: 0;
  font-size: 11px;
  color: #333;
  &::placeholder { color: #4a4a4a; opacity: 1; }
`;
const Apps = styled.div`
  display: flex;
  margin-left: 1px;
`;
const AppBtn = styled.button<{ $run?: boolean; $active?: boolean }>`
  position: relative;
  width: 39px;
  display: flex;
  align-items: center;
  justify-content: center;
  background: ${(p) => (p.$active ? '#353535' : 'none')};
  ${(p) => (p.$run || p.$active) && css`
    &::after { content: ''; position: absolute; bottom: 0; left: ${p.$active ? 0 : 3}px; right: ${p.$active ? 0 : 3}px; height: 2px; background: #76b0de; }
  `}
`;
const Tray = styled.div`
  display: flex;
  align-items: center;
  gap: 7px;
  margin-left: auto;
  padding-right: 3px;
`;
const Clock = styled.time`
  width: 48px;
  margin: 0 4px 0 -4px;
  text-align: center;
  line-height: 15px;
  color: #fff;
`;
const DesktopEdge = styled.span`
  width: 1px;
  height: 32px;
  margin-left: 3px;
  background: #6d6d6d;
`;
const glyph = { fontFamily: 'Liberation Sans, sans-serif', fontWeight: 'bold' as const, stroke: 'none' };

export default function App() {
  return (
    <Page>
      <Global />
      <Header>
        <AppButton aria-label="Application menu">A<Caret $small $tone="#222" /></AppButton>
        <TitleBar>
          <QuickBar>
            {['newFile', 'open', 'save', 'saveAs', 'openMobile', 'saveMobile', 'print'].map((k) => (
              <PlainButton key={k} aria-label={k}>{art[k]}</PlainButton>
            ))}
            <PlainButton aria-label="Undo">{art.undo}<span /><Caret $small /></PlainButton>
            <PlainButton aria-label="Redo">{art.redo}<span /><Caret $small $tone="#7b828a" /></PlainButton>
            <PlainButton aria-label="Customize">{art.more}</PlainButton>
          </QuickBar>
          <Title><span>Autodesk AutoCAD 2020 - EDUCATIONAL VERSION</span><span>assignment 7.dwg</span></Title>
          <Icon w={4} h={8}><path d="M0 1l4 3-4 3z" fill="#d5d8db" stroke="none" /></Icon>
          <Search aria-label="Search help" placeholder="Type a keyword or phrase" />
          <TitleTools $gap={7} $w={66}>
            <PlainButton aria-label="Find">{art.binoculars}</PlainButton>
            <PlainButton>{art.user}Sign In</PlainButton>
          </TitleTools>
          <Spacer $w={37} />
          <TitleTools $gap={4} $w={92}>
            <Caret $small />
            <PlainButton aria-label="Store">{art.cart}</PlainButton>
            <PlainButton aria-label="Apps">{art.autodesk}<span /><Caret $small /></PlainButton>
            <Divider />
            <Help>?</Help>
            <Caret $small />
          </TitleTools>
          <Spacer $w={53} />
          <TitleTools $gap={8} $w={51}>
            <PlainButton aria-label="Minimize">{art.min}</PlainButton>
            <PlainButton aria-label="Restore">{art.restore}</PlainButton>
            <PlainButton aria-label="Close">{art.close}</PlainButton>
          </TitleTools>
          <Spacer $w={5} />
        </TitleBar>
        <Tabs>
          {['Home', 'Insert', 'Annotate', '3D Tools', 'Visualize', 'View', 'Manage', 'Output', 'Add-ins', 'Collaborate', 'Express Tools', 'Featured Apps'].map((t, i) => (
            <Tab key={t} $on={i === 0}>{t}</Tab>
          ))}
          <Tab aria-label="Minimize ribbon">
            <Row><Spacer $w={6} /><Pill><Caret $small $up $tone="#333" /></Pill><Caret $small /></Row>
          </Tab>
        </Tabs>
      </Header>

      <Ribbon>
        <Panel name="Draw" w={179}>
          <Big icon={art.line} label="Line" w={32} />
          <Big icon={art.polyline} label="Polyline" w={38} />
          <Big icon={art.circle} label="Circle" w={42} caret />
          <Big icon={art.arc} label="Arc" w={30} caret />
          <Col $ml={4}>
            <Cmd icon="rect" caret /><Cmd icon="ellipse" caret /><Cmd icon="hatch" caret />
          </Col>
        </Panel>
        <Panel name="Modify" w={200}>
          <Col $w={57} $ml={4}><Cmd icon="move" label="Move" /><Cmd icon="copy" label="Copy" /><Cmd icon="stretch" label="Stretch" /></Col>
          <Col $w={56}><Cmd icon="rotate" label="Rotate" /><Cmd icon="mirror" label="Mirror" /><Cmd icon="scale" label="Scale" /></Col>
          <Col $w={51}><Cmd icon="trim" label="Trim" caret /><Cmd icon="fillet" label="Fillet" caret /><Cmd icon="array" label="Array" caret /></Col>
          <Col $ml={9}><Cmd icon="erase" /><Cmd icon="explode" /><Cmd icon="offset" /></Col>
        </Panel>
        <Panel name="Annotation" w={151}>
          <Big icon={<BigLetter>A</BigLetter>} label="Text" w={36} caret />
          <Big icon={art.dimension} label="Dimension" w={50} />
          <Col $w={58} $ml={2}><Cmd icon="linear" label="Linear" caret /><Cmd icon="leader" label="Leader" caret /><Cmd icon="table" label="Table" /></Col>
        </Panel>
        <Panel name="Layers" w={219}>
          <Big icon={art.layerProps} label={'Layer\nProperties'} w={50} />
          <Col>
            <Picker w={166} pad={64} value="Hidden" name="Layer">
              {art.bulb}{art.sun}{art.unlock}<Swatch $ml={0} />
            </Picker>
            <Row><Cmd icon="layOff" /><Cmd icon="layIso" /><Cmd icon="layFreeze" /><Cmd icon="layLock" /><Cmd icon="layCurrent" label="Make Current" /></Row>
            <Row><Cmd icon="layOn" /><Cmd icon="layUniso" /><Cmd icon="layThaw" /><Cmd icon="layUnlock" /><Cmd icon="layMatch" label="Match Layer" /></Row>
          </Col>
        </Panel>
        <Panel name="Block" w={86}>
          <Big icon={art.insert} label="Insert" w={32} caret />
          <Col $w={50} $ml={1}><Cmd icon="blkCreate" label="Create" /><Cmd icon="blkEdit" label="Edit" /><Cmd icon="blkAttr" caret /></Col>
        </Panel>
        <Panel name="Properties" w={178} launcher>
          <Big icon={art.matchProps} label={'Match\nProperties'} w={50} />
          <Col $w={16}><Cmd icon="wheel" /><Cmd icon="weights" /><Cmd icon="dashes" /></Col>
          <Col>
            <Picker w={109} pad={29} value="ByLayer" name="Object color"><Swatch $ml={8} /></Picker>
            <Picker w={109} pad={54} value="ByLayer" name="Lineweight"><Icon w={52} h={6}><path d="M1 3.500h51" stroke="#dfe2e4" /></Icon></Picker>
            <Picker w={109} pad={54} value="ByLayer" name="Linetype"><Icon w={52} h={6}><path d="M1 3.500h50" stroke="#dfe2e4" strokeDasharray="12 6" /></Icon></Picker>
          </Col>
        </Panel>
        <Panel name="Groups" w={55}>
          <Big icon={art.group} label="Group" w={32} />
          <Col $w={20} $ml={1}><Cmd icon="ungroup" /><Cmd icon="groupEdit" /><Cmd icon="groupSel" on /></Col>
        </Panel>
        <Panel name="Utilities" w={77}>
          <Big icon={art.measure} label="Measure" w={56} caret />
          <Col $ml={1}><Cmd icon="quickSel" /><Cmd icon="selectAll" /><Cmd icon="calc" /></Col>
        </Panel>
        <Panel name="Clipboard" w={64} caret={false}>
          <Big icon={art.paste} label="Paste" w={43} caret />
          <Col $ml={1}><Cmd icon="cut" /><Cmd icon="copyClip" /></Col>
        </Panel>
        <Panel name="View" w={50} launcher>
          <Big icon={art.base} label="Base" w={49} caret />
        </Panel>
      </Ribbon>

      <FileTabs>
        <FileTab>Start</FileTab>
        <FileTab $on>assignment 7*<PlainButton aria-label="Close drawing"><Cross /></PlainButton></FileTab>
        <AddTab aria-label="New drawing"><Plus /></AddTab>
      </FileTabs>

      <Main>
        <Side>
          <SideTitle>
            <Icon w={3} h={9}><path d="M1.500 0v9" strokeWidth="2" strokeDasharray="2 1" /></Icon>
            DRAWING RECOVERY MANAGER
          </SideTitle>
          <SectionHead>Backup Files<Caret /></SectionHead>
          <SectionBody $grow={131}>
            <Tree>
              {['Montrose Skill Center', 'Drawing1 - Copy', 'assignment 7'].map((t) => (
                <TreeRow key={t}>
                  <PlainButton aria-label={`Expand ${t}`}>
                    <Icon w={8}><path d="M.5 .5h7v7h-7z" fill="#eceef0" stroke="#8d949b" /><path d="M4 2v4M2 4h4" stroke="#222a33" /></Icon>
                  </PlainButton>
                  <Icon w={11} h={8}><path d="M-4.500 4.500h4" strokeDasharray="1 1" stroke="#8d949b" /><path d="M0 7.500V.5h4l1 1.500h4v1.500" fill="#9da4aa" stroke="none" /><path d="M1 7.500l2-4h8l-2 4z" fill="#d8dbde" stroke="#20262f" strokeWidth=".5" /></Icon>
                  {t}
                </TreeRow>
              ))}
            </Tree>
          </SectionBody>
          <Splitter>{[0, 1, 2, 3, 4].map((i) => <SplitDot key={i} />)}</Splitter>
          <SectionHead>Details<Caret /></SectionHead>
          <SectionBody $grow={206} />
          <Splitter />
          <SectionHead>Preview<Caret /></SectionHead>
          <SectionBody $grow={95} />
        </Side>
        <Canvas>
          <Part />
          <ViewLabel>[−][Top][2D Wireframe]</ViewLabel>
          <WindowTools>
            <PlainButton aria-label="Minimize drawing"><Icon w={9}><path d="M1 6.500h7" stroke="#fff" strokeWidth="2" /></Icon></PlainButton>
            <PlainButton aria-label="Restore drawing"><Icon w={9}><path d="M1 3.500h5v5H1zM3 3V1h5v5H6.500" stroke="#fff" strokeWidth="1.300" /></Icon></PlainButton>
            <PlainButton aria-label="Close drawing window"><Icon w={9}><path d="M1.500 1.500l6 6M7.500 1.500l-6 6" stroke="#fff" strokeWidth="1.700" /></Icon></PlainButton>
          </WindowTools>
          <CubeBox>
            <Cube />
            <Wcs>WCS<Caret $tone="#868d94" /></Wcs>
          </CubeBox>
          <NavBar><NavArt /></NavBar>
          <CommandLine>
            <CommandInput aria-label="Command line" />
            <Caret $up $tone="#3a4046" />
          </CommandLine>
        </Canvas>
      </Main>

      <StatusBar>
        <LayoutTabs>
          <LayoutTab $w={45} $on>Model</LayoutTab>
          <LayoutTab $w={52}>Layout1</LayoutTab>
          <LayoutTab $w={53}>Layout2</LayoutTab>
          <LayoutTab $w={22} aria-label="Add layout"><Plus /></LayoutTab>
        </LayoutTabs>
        <StatusTools>
          <StatusBtn $w={38}>MODEL</StatusBtn>
          <StatusBtn $w={19} $on aria-label="Grid">{st.grid}</StatusBtn>
          <StatusBtn $w={18} aria-label="Snap">{st.snap}</StatusBtn>
          <StatusBtn $w={13} aria-label="Snap options"><Caret /></StatusBtn>
          <StatusBtn $w={18} aria-label="Ortho">{st.ortho}</StatusBtn>
          <StatusBtn $w={18} $on aria-label="Polar tracking">{st.polar}</StatusBtn>
          <StatusBtn $w={12} aria-label="Polar options"><Caret /></StatusBtn>
          <StatusBtn $w={17} aria-label="Isometric drafting">{st.iso}</StatusBtn>
          <StatusBtn $w={13} aria-label="Isometric options"><Caret /></StatusBtn>
          <StatusBtn $w={18} $on aria-label="Object snap tracking">{st.track}</StatusBtn>
          <StatusBtn $w={18} $on aria-label="Object snap">{st.osnap}</StatusBtn>
          <StatusBtn $w={14} aria-label="Object snap options"><Caret /></StatusBtn>
          <StatusBtn $w={18} $on aria-label="Annotation visibility">{st.annoA}</StatusBtn>
          <StatusBtn $w={18} aria-label="Auto scale">{st.annoB}</StatusBtn>
          <StatusBtn $w={18} aria-label="Annotation scale">{st.annoC}</StatusBtn>
          <StatusBtn $w={27}>1:1<Caret /></StatusBtn>
          <StatusBtn $w={20} aria-label="Workspace">{st.gear}</StatusBtn>
          <StatusBtn $w={11} aria-label="Workspace options"><Caret /></StatusBtn>
          <StatusBtn $w={19} aria-label="Annotation monitor">{st.plus}</StatusBtn>
          <StatusBtn $w={21} aria-label="Isolate objects">{st.shapes}</StatusBtn>
          <StatusBtn $w={19} aria-label="Performance">{st.perf}</StatusBtn>
          <StatusBtn $w={19} aria-label="Clean screen">{st.full}</StatusBtn>
          <StatusBtn $w={17} aria-label="Customization">{st.menu}</StatusBtn>
        </StatusTools>
      </StatusBar>

      <Taskbar>
        <Start aria-label="Start menu">
          <Icon w={14}><path d="M0 2l6-1v5.500H0zM7 .9L14 0v6.500H7zM0 7.500h6V13l-6-1zM7 7.500h7V14l-7-.9z" fill="#fff" stroke="none" /></Icon>
        </Start>
        <TaskSearch>
          <Icon w={17}><circle cx="8.500" cy="8.500" r="7" stroke="#1c1c1c" strokeWidth="2" /></Icon>
          <TaskInput aria-label="Search Windows" placeholder="Type here to search" />
          <Icon w={10} h={14}><path d="M3.500 1h3v8h-3zM1 6v4.500h8V6M5 10.500v3" stroke="#555" /></Icon>
        </TaskSearch>
        <Apps>
          <AppBtn aria-label="Task view"><Icon w={16} h={12}><path d="M4 1h8v10H4zM2.500 2.500H.5v7h2M13.500 2.500h2v7h-2" stroke="#e8e8e8" /></Icon></AppBtn>
          <AppBtn aria-label="File Explorer"><Icon w={17} h={15}><path d="M0 1h6l1 2h10v11H0z" fill="#f7d775" stroke="none" /><path d="M0 5h17v9H0z" fill="#fbe79b" stroke="none" /><path d="M4 14V9h9v5h-3v-2H7v2z" fill="#3aa0dc" stroke="none" /></Icon></AppBtn>
          <AppBtn aria-label="Store"><Icon w={18} h={18}><path d="M1 5h16v13H1z" fill="#f4f4f4" stroke="none" /><path d="M5.500 5V1.500h7V5" stroke="#f4f4f4" strokeWidth="1.500" /><path d="M5 7.500h3.500V11H5z" fill="#e5502c" stroke="none" /><path d="M9.500 7.500H13V11H9.500z" fill="#7fb93d" stroke="none" /><path d="M5 12h3.500v3.500H5z" fill="#3a9ee0" stroke="none" /><path d="M9.500 12H13v3.500H9.500z" fill="#f3b52e" stroke="none" /></Icon></AppBtn>
          <AppBtn aria-label="Mail"><Icon w={20} h={18}><path d="M0 7l10-6 10 6v10H0z" fill="#1769b5" stroke="none" /><path d="M2 6h16v8H2z" fill="#fff" stroke="none" /><path d="M0 7l10 6 10-6v10H0z" fill="#35a8ea" stroke="none" /></Icon></AppBtn>
          <AppBtn $run aria-label="Chrome"><Icon w={18}><g stroke="none"><path d="M9 9L1.200 4.500A9 9 0 0 1 16.800 4.500z" fill="#dd4b3e" /><path d="M9 9h7.800l0-4.500A9 9 0 0 1 9 18z" fill="#f7c933" /><path d="M1.200 4.500L9 9l2 3-2 6A9 9 0 0 1 1.200 4.500z" fill="#2f9e53" /><circle cx="9" cy="9" r="4.200" fill="#fff" /><circle cx="9" cy="9" r="3.300" fill="#4a86e8" /></g></Icon></AppBtn>
          <AppBtn aria-label="Outlook"><Icon w={18} h={18}><path d="M9 4h9v10H9z" fill="#e8f1fa" stroke="none" /><path d="M11 8l2 2.500L17 6" stroke="#1769b5" strokeWidth="1.500" /><path d="M0 2l11-2v18L0 16z" fill="#0f6cbd" stroke="none" /><text x="1.500" y="13" fill="#fff" fontSize="11" {...glyph}>O</text></Icon></AppBtn>
          <AppBtn $run aria-label="Excel"><Icon w={18} h={18}><path d="M10 3h8v12h-8z" fill="#e6f2ea" stroke="none" /><path d="M10 6h8M10 9h8M10 12h8M14 3v12" stroke="#217346" /><path d="M0 2l11-2v18L0 16z" fill="#217346" stroke="none" /><text x="2" y="13" fill="#fff" fontSize="11" {...glyph}>X</text></Icon></AppBtn>
          <AppBtn $active aria-label="AutoCAD"><Icon w={20}><path d="M0 0h20v20H0z" fill="#f6e3e0" stroke="none" /><text x="3" y="17" fill="#b3191f" fontSize="20" {...glyph}>A</text></Icon></AppBtn>
        </Apps>
        <Tray>
          <PlainButton aria-label="People"><Icon w={13}><circle cx="9" cy="2.500" r="2" stroke="#fff" /><circle cx="4" cy="6" r="2" stroke="#fff" /><path d="M1 12c0-3 6-3 6 0M7 6c3-1.500 5 0 5 3" stroke="#fff" /></Icon></PlainButton>
          <Spacer $w={3} />
          <PlainButton aria-label="Hidden icons"><Icon w={10} h={6}><path d="M.5 5.500L5 1l4.500 4.500" stroke="#fff" /></Icon></PlainButton>
          <PlainButton aria-label="Volume"><Icon w={13} h={10}><path d="M.5 3.500h2L6 1v8L2.500 6.500h-2zM8 3l4 4M12 3L8 7" stroke="#fff" /></Icon></PlainButton>
          <PlainButton aria-label="Network"><Icon w={14} h={12}><path d="M3 2.500h10v6H3zM8 8.500V11M5 11.500h6" stroke="#fff" /><path d="M.5 .5h4v3h-4z" fill="#000" stroke="#fff" /></Icon></PlainButton>
          <Clock>8:50 AM<br />11/11/2020</Clock>
          <PlainButton aria-label="Notifications">
            <Icon w={20} h={18}><path d="M1 1h13v9H8l-3 3v-3H1z" fill="#fff" stroke="none" /><path d="M3 3.500h9M3 6h9" stroke="#222" /><circle cx="13.500" cy="12" r="5.500" fill="#3a3a3a" stroke="#8a8a8a" strokeWidth=".7" /><text x="11.500" y="15" fill="#fff" fontSize="9" {...glyph}>4</text></Icon>
          </PlainButton>
          <DesktopEdge />
        </Tray>
      </Taskbar>

      <Notice>
        <Icon w={5} h={10}><path d="M1 1v8M4 1v8" stroke="#b5b8bc" /></Icon>
        <NoticeText>Screencastify - Screen Video Recorder is sharing your screen.</NoticeText>
        <StopButton>Stop sharing</StopButton>
        <HideLink href="#hide">Hide</HideLink>
      </Notice>
    </Page>
  );
}
